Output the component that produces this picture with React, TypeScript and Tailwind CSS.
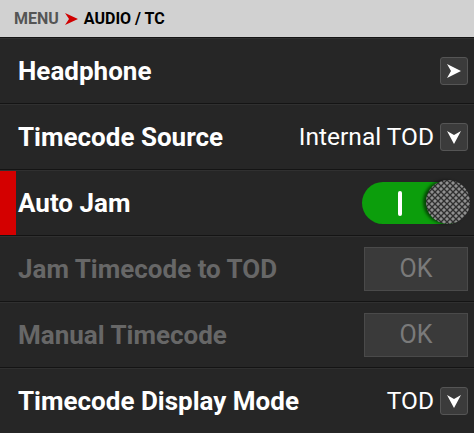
import React from "react";

const font = { fontFamily: "Roboto, 'Liberation Sans', sans-serif" };

function SquareButton({ dir }: { dir: "right" | "down" }) {
    return (
        <div className="w-[28px] h-[28px] rounded-[3px] border border-[#555] bg-[#3b3b3b] flex items-center justify-center">
            {dir === "right" ? (
                <svg width="18" height="18" viewBox="0 0 18 18">
                    <path d="M2 2 L16 9 L2 16 L6 9 Z" fill="#fff" />
                </svg>
            ) : (
                <svg width="18" height="18" viewBox="0 0 18 18">
                    <path d="M2 3 L9 16 L16 3 L9 7 Z" fill="#fff" />
                </svg>
            )}
        </div>
    );
}

function OkButton() {
    return (
        <div className="w-[104px] h-[44px] border border-[#4a4a4a] bg-[#3a3a3a] flex items-center justify-center text-[25px] text-[#7a7a7a]">
            OK
        </div>
    );
}

function Toggle() {
    return (
        <div className="relative w-[106px] h-[42px] rounded-full bg-[#0c9e0c] flex items-center">
            <div className="ml-[36px] w-[4px] h-[25px] rounded-full bg-white" />
            <div className="absolute right-[-2px] top-[-2px] w-[44px] h-[44px] rounded-full bg-[#303030] bg-[radial-gradient(circle,#8f8f8f_1.3px,transparent_1.9px),radial-gradient(circle,#8f8f8f_1.3px,transparent_1.9px)] bg-[length:6px_6px] bg-[position:0_0,3px_3px] shadow-[-3px_0_3px_rgba(0,0,0,0.55)]" />
        </div>
    );
}

function Row({
    label,
    disabled,
    active,
    children,
}: {
    label: string;
    disabled?: boolean;
    active?: boolean;
    children?: React.ReactNode;
}) {
    return (
        <div className="h-[66px] border-t border-[#141414] flex">
            <div className="flex-1 border-t border-[#303030] bg-[#262626] flex items-center relative pl-[18px] pr-[6px]">
                {active && <div className="absolute left-0 top-0 bottom-0 w-[16px] bg-[#d40000]" />}
                <span
                    className={
                        "relative text-[26px] font-bold flex-1 whitespace-nowrap " +
                        (disabled ? "text-[#676767]" : "text-white")
                    }
                >
                    {label}
                </span>
                <div className="flex items-center gap-[6px]">{children}</div>
            </div>
        </div>
    );
}

export default function App() {
    return (
        <div style={font} className="w-[474px] h-[433px] bg-[#262626] overflow-hidden">
            <div className="h-[37px] bg-[#d1d1d1] flex items-center pl-[14px] gap-[6px] text-[16px] font-bold">
                <span className="text-[#555]">MENU</span>
                <svg width="13" height="12" viewBox="0 0 13 12">
                    <path d="M0 0 L13 6 L0 12 L4 6 Z" fill="#d00000" />
                </svg>
                <span className="text-black">AUDIO / TC</span>
            </div>
            <Row label="Headphone">
                <SquareButton dir="right" />
            </Row>
            <Row label="Timecode Source">
                <span className="text-[24.5px] text-white">Internal TOD</span>
                <SquareButton dir="down" />
            </Row>
            <Row label="Auto Jam" active>
                <Toggle />
            </Row>
            <Row label="Jam Timecode to TOD" disabled>
                <OkButton />
            </Row>
            <Row label="Manual Timecode" disabled>
                <OkButton />
            </Row>
            <Row label="Timecode Display Mode">
                <span className="text-[24.5px] text-white">TOD</span>
                <SquareButton dir="down" />
            </Row>
        </div>
    );
}
